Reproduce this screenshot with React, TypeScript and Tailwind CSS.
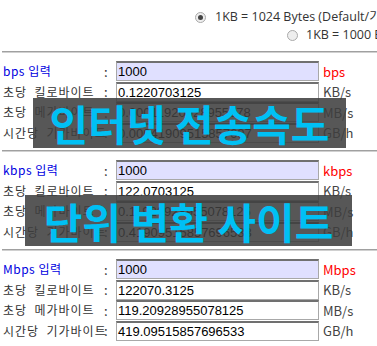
import React from "react";

type Row = { label: string; value: string; unit: string };
type Section = { name: string; input: string; unit: string; rows: Row[] };

const sections: Section[] = [
  {
    name: "bps 입력",
    input: "1000",
    unit: "bps",
    rows: [
      { label: "초당 킬로바이트", value: "0.1220703125", unit: "KB/s" },
      { label: "초당 메가바이트", value: "0.00011920928955078", unit: "MB/s" },
      { label: "시간당 기가바이트", value: "0.00041909515857697", unit: "GB/h" },
    ],
  },
  {
    name: "kbps 입력",
    input: "1000",
    unit: "kbps",
    rows: [
      { label: "초당 킬로바이트", value: "122.0703125", unit: "KB/s" },
      { label: "초당 메가바이트", value: "0.11920928955078125", unit: "MB/s" },
      { label: "시간당 기가바이트", value: "0.41909515857696533", unit: "GB/h" },
    ],
  },
  {
    name: "Mbps 입력",
    input: "1000",
    unit: "Mbps",
    rows: [
      { label: "초당 킬로바이트", value: "122070.3125", unit: "KB/s" },
      { label: "초당 메가바이트", value: "119.20928955078125", unit: "MB/s" },
      { label: "시간당 기가바이트", value: "419.09515857696533", unit: "GB/h" },
    ],
  },
];

const kr = { fontFamily: '"Noto Sans CJK KR", "Liberation Sans", sans-serif' };
const num = { fontFamily: '"Liberation Sans", "Noto Sans CJK KR", sans-serif' };

function Line({ label, value, unit, head }: { label: string; value: string; unit: string; head?: boolean }) {
  return (
    <div className="flex items-center h-[20.5px] text-[13px] leading-none">
      <div
        className={`w-[104px] shrink-0 pl-[3px] whitespace-nowrap text-[12px] ${head ? "text-[#0000e0] tracking-[0.5px]" : "text-[#333] tracking-[1px]"}`}
        style={kr}
      >
        {head ? label : label.replace(" ", "\u00a0\u00a0")}
      </div>
      <div className="w-[12px] shrink-0 text-[#333]" style={kr}>:</div>
      <div
        className={`w-[203px] shrink-0 h-[20px] flex items-center pl-[1px] border border-[#a8a8a8] border-t-[#707070] border-t-2 overflow-hidden whitespace-nowrap text-black ${head ? "bg-[#e0e0ff]" : "bg-white"}`}
        style={num}
      >
        {value}
      </div>
      <div className={`pl-[4px] ${head ? "text-[#ff0000]" : "text-[#444]"}`} style={kr}>
        {unit}
      </div>
    </div>
  );
}

function Banner({ text, className }: { text: string; className: string }) {
  return (
    <div
      className={`absolute bg-[rgba(62,62,62,0.87)] flex items-center justify-center text-[#00c0f4] font-bold text-[42px] leading-none whitespace-nowrap ${className}`}
      style={{ fontFamily: '"Noto Sans CJK KR", sans-serif' }}
    >
      {text}
    </div>
  );
}

export default function App() {
  return (
    <main className="relative w-[377px] h-[346px] overflow-hidden bg-white">
      <div className="h-[51px] pt-[10px] text-[12.5px] text-[#333] whitespace-nowrap" style={{ fontFamily: '"Open Sans", "Noto Sans CJK KR", sans-serif' }}>
        <label className="flex items-center pl-[195px] h-[15px]">
          <span className="w-[11px] h-[11px] shrink-0 rounded-full border border-[#aaa] bg-[#eee] flex items-center justify-center">
            <span className="w-[5px] h-[5px] rounded-full bg-[#444]" />
          </span>
          <span className="pl-[9px]">1KB = 1024 Bytes (Default/기본값)</span>
        </label>
        <label className="flex items-center pl-[287px] h-[20px]">
          <span className="w-[11px] h-[11px] shrink-0 rounded-full border border-[#aaa] bg-[#eee]" />
          <span className="pl-[8px]">1KB = 1000 Bytes</span>
        </label>
      </div>

      {sections.map((s) => (
        <section key={s.name}>
          <div className="ml-[2px] h-[2px] bg-[#a0a0a0] border-b border-[#d0d0d0]" />
          <div className="pt-[8px] pb-[7px]">
            <Line label={s.name} value={s.input} unit={s.unit} head />
            {s.rows.map((r) => (
              <Line key={r.label} label={r.label} value={r.value} unit={r.unit} />
            ))}
          </div>
        </section>
      ))}

      <Banner text="인터넷 전송속도" className="left-[33px] top-[98px] w-[313px] h-[50px]" />
      <Banner text="단위 변환 사이트" className="left-[25px] top-[195px] w-[327px] h-[51px]" />
    </main>
  );
}
